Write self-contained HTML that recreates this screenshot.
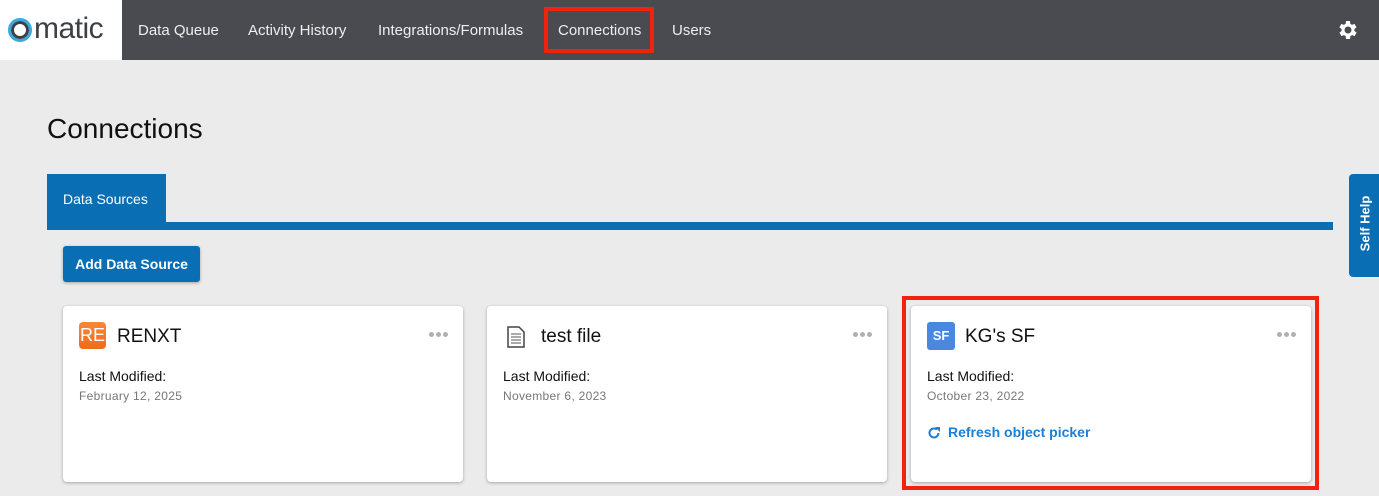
<!DOCTYPE html>
<html><head><style>
*{box-sizing:border-box;margin:0;padding:0}
body{width:1379px;height:496px;overflow:hidden;background:#ebebeb;font-family:"Liberation Sans",sans-serif;position:relative}
.nav{position:absolute;left:0;top:0;width:1379px;height:60px;background:#494b50}
.logo{position:absolute;left:0;top:0;width:122px;height:60px;background:#fff}
.ring{position:absolute;left:8px;top:18px;width:24px;height:24px;border-radius:50%;border:3px solid #39a9e0;box-shadow:inset 0 0 0 3px #3d3f44}
.logo span{position:absolute;left:34px;top:12px;font-size:30px;color:#3d3f44;letter-spacing:-0.5px}
.nl{position:absolute;top:22px;font-size:15px;color:#eee}
.abs{position:absolute}
.card{position:absolute;top:306px;width:400px;height:176px;background:#fff;border-radius:4px;box-shadow:0 1px 3px rgba(0,0,0,.3)}
.card .t{position:absolute;left:54px;top:20px;font-size:19px;color:#111}
.card .lm{position:absolute;left:16px;top:62px;font-size:14px;color:#111}
.card .d{position:absolute;left:16px;top:83px;font-size:12px;color:#777;letter-spacing:.3px}
.dots{position:absolute;right:15px;top:18px;font-size:14px;color:#aaa;letter-spacing:1px}
.dots b{display:inline-block;width:5px;height:5px;border-radius:50%;background:#b0b0b0;margin-left:2px}
</style></head><body>
<div class="nav">
<div class="logo"><div class="ring"></div><span>matic</span></div>
<div class="nl" style="left:138px">Data Queue</div>
<div class="nl" style="left:248px">Activity History</div>
<div class="nl" style="left:378px">Integrations/Formulas</div>
<div class="nl" style="left:558px">Connections</div>
<div class="nl" style="left:672px">Users</div>
<div class="abs" style="left:544px;top:7px;width:110px;height:46px;border:4px solid #f2220f"></div>
<svg class="abs" style="left:1336px;top:18px" width="24" height="24" viewBox="0 0 24 24"><path fill="#fff" d="M19.4 13a7.5 7.5 0 0 0 0-2l2.1-1.6-2-3.5-2.5 1a7 7 0 0 0-1.7-1L15 3h-4l-.4 2.9a7 7 0 0 0-1.7 1l-2.5-1-2 3.5L6.6 11a7.5 7.5 0 0 0 0 2l-2.1 1.6 2 3.5 2.5-1a7 7 0 0 0 1.7 1L11 21h4l.4-2.9a7 7 0 0 0 1.7-1l2.5 1 2-3.5zM13 15.5a3.5 3.5 0 1 1 0-7 3.5 3.5 0 0 1 0 7z" transform="translate(-1 0)"/></svg>
</div>
<div class="abs" style="left:47px;top:113px;font-size:28px;color:#111">Connections</div>
<div class="abs" style="left:47px;top:174px;width:119px;height:52px;background:#0a6eb4;color:#fff;font-size:14px;padding:17px 0 0 16px">Data Sources</div>
<div class="abs" style="left:47px;top:222px;width:1286px;height:8px;background:#0a6eb4"></div>
<div class="abs" style="left:63px;top:246px;width:137px;height:36px;background:#0a6eb4;border-radius:3px;box-shadow:0 1px 3px rgba(0,0,0,.3);color:#fff;font-size:14px;font-weight:bold;text-align:center;line-height:36px">Add Data Source</div>
<div class="abs" style="left:1349px;top:174px;width:32px;height:103px;background:#0a6eb4;border-radius:4px 0 0 4px"><div style="position:absolute;left:-24px;top:42px;width:80px;transform:rotate(-90deg);color:#fff;font-size:13px;font-weight:bold;text-align:center">Self Help</div></div>
<div class="card" style="left:63px">
<div class="abs" style="left:16px;top:16px;width:27px;height:27px;border-radius:4px;background:linear-gradient(#f7883a,#ef6c1a);color:#fff;font-size:18px;text-align:center;line-height:27px">RE</div>
<div class="t">RENXT</div><div class="dots"><b></b><b></b><b></b></div>
<div class="lm">Last Modified:</div><div class="d">February 12, 2025</div></div>
<div class="card" style="left:487px">
<svg class="abs" style="left:20px;top:20px" width="18" height="22" viewBox="0 0 18 22"><path d="M1 1h11l5 5v15H1z" fill="#fff" stroke="#444" stroke-width="1.5"/><path d="M4 8h10M4 11h10M4 14h10M4 17h10" stroke="#555" stroke-width="1"/></svg>
<div class="t">test file</div><div class="dots"><b></b><b></b><b></b></div>
<div class="lm">Last Modified:</div><div class="d">November 6, 2023</div></div>
<div class="card" style="left:911px">
<div class="abs" style="left:16px;top:16px;width:28px;height:28px;border-radius:3px;background:#4a88e0;color:#fff;font-size:13px;font-weight:bold;text-align:center;line-height:28px">SF</div>
<div class="t">KG's SF</div><div class="dots"><b></b><b></b><b></b></div>
<div class="lm">Last Modified:</div><div class="d">October 23, 2022</div>
<svg class="abs" style="left:16px;top:120px" width="14" height="14" viewBox="0 0 14 14"><path d="M11.5 7A4.5 4.5 0 1 1 10 3.6" fill="none" stroke="#1a7fd6" stroke-width="2"/><path d="M8 1h5v5z" fill="#1a7fd6"/></svg>
<div class="abs" style="left:37px;top:118px;font-size:14px;font-weight:bold;color:#1a7fd6">Refresh object picker</div>
</div>
<div class="abs" style="left:902px;top:296px;width:417px;height:194px;border:4px solid #f2220f"></div>
</body></html>
